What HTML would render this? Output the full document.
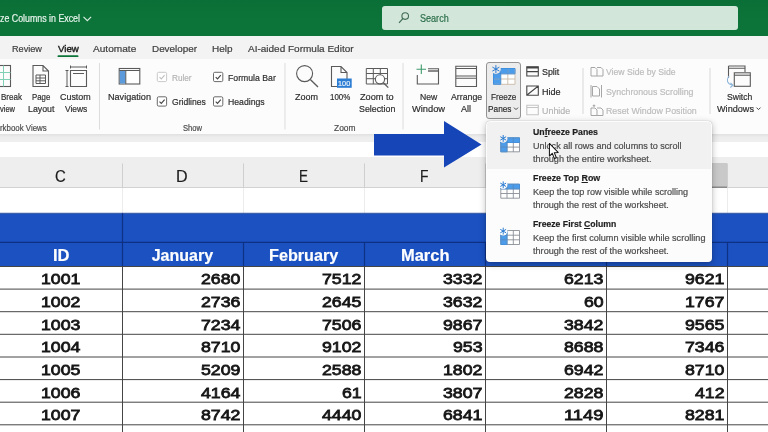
<!DOCTYPE html><html><head><meta charset="utf-8"><title>Excel - Freeze Panes</title><style>
html,body{margin:0;padding:0}body{width:768px;height:432px;overflow:hidden;position:relative;background:#fff;font-family:"Liberation Sans", sans-serif}
.a{position:absolute}.t{position:absolute;white-space:nowrap;line-height:1;transform-origin:0 50%;-webkit-text-stroke-width:.2px}
#txt{position:absolute;left:0;top:0;width:768px;height:432px;will-change:transform;opacity:.999}

#title{left:0;top:0;width:768px;height:36px;background:linear-gradient(#0a6f36,#0c7439 60%)}
#search{left:382px;top:6px;width:356px;height:24px;border-radius:3px;background:#d2e7da}
#tabs{left:0;top:36px;width:768px;height:23px;background:#f3f3f3}
#ribbon{left:0;top:59px;width:768px;height:75px;background:#fcfcfc}
#strip{left:0;top:134px;width:768px;height:8px;background:linear-gradient(#e0e0e0,#ededed 40%,#efefef)}
#fbar{left:0;top:142px;width:768px;height:15px;background:#fff}
#colhdr{left:0;top:157px;width:768px;height:31px;background:#eeeeee;border-bottom:1px solid #d2d2d2;box-sizing:border-box}
#band{left:0;top:213.5px;width:768px;height:52.8px;background:#1b51c1}
#menu{left:486px;top:121px;width:226px;height:141px;background:#fcfcfc;border-radius:4px;box-shadow:0 2px 7px rgba(0,0,0,.28),0 0 1px rgba(0,0,0,.35)}
#hl{left:487px;top:122px;width:224px;height:47px;background:#f1f1f1;border-radius:3px 3px 0 0}
#fz{left:486px;top:62px;width:35px;height:57px;box-sizing:border-box;background:#ececec;border:1px solid #939393;border-radius:3px}

</style></head><body>
<div class="a" id="title"></div>
<div class="a" id="search"></div>
<div class="a" id="tabs"></div>
<div class="a" id="ribbon"></div>
<div class="a" id="strip"></div>
<div class="a" id="fbar"></div>
<div class="a" id="colhdr"></div>
<div class="a" id="band"></div>
<svg class="a" style="left:0;top:0" width="768" height="432" viewBox="0 0 768 432" shape-rendering="auto"><line x1="122.5" y1="163.5" x2="122.5" y2="188" stroke="#cfcfcf" stroke-width="1"/><line x1="243.5" y1="163.5" x2="243.5" y2="188" stroke="#cfcfcf" stroke-width="1"/><line x1="364.5" y1="163.5" x2="364.5" y2="188" stroke="#cfcfcf" stroke-width="1"/><line x1="485.5" y1="163.5" x2="485.5" y2="188" stroke="#cfcfcf" stroke-width="1"/><line x1="606.5" y1="163.5" x2="606.5" y2="188" stroke="#cfcfcf" stroke-width="1"/><line x1="727.5" y1="163.5" x2="727.5" y2="188" stroke="#cfcfcf" stroke-width="1"/><rect x="712" y="163" width="15" height="25" fill="#c9c9c9"/><rect x="712" y="186.5" width="15" height="1.5" fill="#8a8a8a"/><line x1="122.5" y1="188" x2="122.5" y2="213" stroke="#ececec" stroke-width="1"/><line x1="243.5" y1="188" x2="243.5" y2="213" stroke="#ececec" stroke-width="1"/><line x1="364.5" y1="188" x2="364.5" y2="213" stroke="#ececec" stroke-width="1"/><line x1="485.5" y1="188" x2="485.5" y2="213" stroke="#ececec" stroke-width="1"/><line x1="606.5" y1="188" x2="606.5" y2="213" stroke="#ececec" stroke-width="1"/><line x1="727.5" y1="188" x2="727.5" y2="213" stroke="#ececec" stroke-width="1"/><line x1="0" y1="242.3" x2="768" y2="242.3" stroke="#0e3184" stroke-width="1.2"/><line x1="122.5" y1="213" x2="122.5" y2="267" stroke="#0e3184" stroke-width="1.2"/><line x1="243.5" y1="242" x2="243.5" y2="267" stroke="#0e3184" stroke-width="1.2"/><line x1="364.5" y1="242" x2="364.5" y2="267" stroke="#0e3184" stroke-width="1.2"/><line x1="485.5" y1="242" x2="485.5" y2="267" stroke="#0e3184" stroke-width="1.2"/><line x1="606.5" y1="242" x2="606.5" y2="267" stroke="#0e3184" stroke-width="1.2"/><line x1="727.5" y1="242" x2="727.5" y2="267" stroke="#0e3184" stroke-width="1.2"/><line x1="0" y1="213.3" x2="768" y2="213.3" stroke="#0f3a98" stroke-width="1"/><line x1="0" y1="266.5" x2="768" y2="266.5" stroke="#454545" stroke-width="1"/><line x1="0" y1="289.1" x2="768" y2="289.1" stroke="#454545" stroke-width="1"/><line x1="0" y1="311.7" x2="768" y2="311.7" stroke="#454545" stroke-width="1"/><line x1="0" y1="334.3" x2="768" y2="334.3" stroke="#454545" stroke-width="1"/><line x1="0" y1="357.0" x2="768" y2="357.0" stroke="#454545" stroke-width="1"/><line x1="0" y1="379.6" x2="768" y2="379.6" stroke="#454545" stroke-width="1"/><line x1="0" y1="402.2" x2="768" y2="402.2" stroke="#454545" stroke-width="1"/><line x1="0" y1="424.8" x2="768" y2="424.8" stroke="#454545" stroke-width="1"/><line x1="122.5" y1="266.5" x2="122.5" y2="432" stroke="#454545" stroke-width="1"/><line x1="243.5" y1="266.5" x2="243.5" y2="432" stroke="#454545" stroke-width="1"/><line x1="364.5" y1="266.5" x2="364.5" y2="432" stroke="#454545" stroke-width="1"/><line x1="485.5" y1="266.5" x2="485.5" y2="432" stroke="#454545" stroke-width="1"/><line x1="606.5" y1="266.5" x2="606.5" y2="432" stroke="#454545" stroke-width="1"/><line x1="727.5" y1="266.5" x2="727.5" y2="432" stroke="#454545" stroke-width="1"/><polygon points="374,134 444,134 444,121 481.5,144.5 444,167.5 444,155.5 374,155.5" fill="#1645b8"/></svg>
<div class="a" id="fz"></div>
<svg class="a" style="left:0;top:0" width="768" height="140" viewBox="0 0 768 140" fill="none" stroke-linecap="butt"><polyline points="83.5,16.8 87.3,20.6 91.1,16.8" stroke="#d9eee1" stroke-width="1.2"/><circle cx="405.2" cy="16.1" r="3.3" stroke="#3e6a52" stroke-width="1.1"/><line x1="402.8" y1="18.6" x2="399" y2="22.8" stroke="#3e6a52" stroke-width="1.2"/><rect x="57.5" y="55.3" width="21" height="1.8" rx=".9" fill="#0c7439" stroke="none"/><line x1="99.5" y1="63" x2="99.5" y2="129.5" stroke="#dcdcdc" stroke-width="1"/><line x1="285" y1="63" x2="285" y2="129.5" stroke="#dcdcdc" stroke-width="1"/><line x1="403" y1="63" x2="403" y2="129.5" stroke="#dcdcdc" stroke-width="1"/><line x1="583" y1="68" x2="583" y2="114" stroke="#d8d8d8" stroke-width="1"/><line x1="710" y1="68" x2="710" y2="114" stroke="#d8d8d8" stroke-width="1"/><rect x="-6" y="65.5" width="16.5" height="21" stroke="#5a5a5a" stroke-width="1.1"/><line x1="3.5" y1="65.5" x2="3.5" y2="86.5" stroke="#7fd0b4" stroke-width="1"/><line x1="-6" y1="72.5" x2="10.5" y2="72.5" stroke="#7fd0b4" stroke-width="1"/><line x1="-6" y1="79.5" x2="10.5" y2="79.5" stroke="#7fd0b4" stroke-width="1"/><path d="M33,65.5 H43 L48.5,71 V86.5 H33 Z M43,65.5 V71 H48.5" stroke="#5a5a5a" stroke-width="1.1"/><path d="M36,75 H45.5 V83.5 H36 Z M36,78 H45.5 M36,80.8 H45.5 M40,75 V83.5" stroke="#5a5a5a" stroke-width="1"/><path d="M70.5,70.5 H86.5 V86.5 H70.5 Z M73,73.5 H84" stroke="#5a5a5a" stroke-width="1.1"/><path d="M70.5,67 H86.5 M70.5,65.5 V68.5 M86.5,65.5 V68.5 M67,70.5 V86.5 M65.5,70.5 H68.5 M65.5,86.5 H68.5" stroke="#5a5a5a" stroke-width="1"/><rect x="119.2" y="68.5" width="20.6" height="15.5" fill="#fff" stroke="#5a5a5a" stroke-width="1.1"/><rect x="119.8" y="70.5" width="5.8" height="13" fill="#5b9bdc" stroke="none"/><path d="M119.2,70.5 H139.8 M125.8,70.5 V84" stroke="#5a5a5a" stroke-width="1"/><rect x="157.3" y="72.3" width="9.3" height="9.3" rx="1.3" fill="#fff" stroke="#c9c9c9" stroke-width="1"/><polyline points="159.5,77.1 161.3,78.89999999999999 164.60000000000002,75.1" stroke="#c0c0c0" stroke-width="1.1"/><rect x="157.3" y="96.8" width="9.3" height="9.3" rx="1.3" fill="#fff" stroke="#6a6a6a" stroke-width="1"/><polyline points="159.5,101.6 161.3,103.39999999999999 164.60000000000002,99.6" stroke="#444" stroke-width="1.1"/><rect x="213.5" y="72.3" width="9.3" height="9.3" rx="1.3" fill="#fff" stroke="#6a6a6a" stroke-width="1"/><polyline points="215.7,77.1 217.5,78.89999999999999 220.8,75.1" stroke="#444" stroke-width="1.1"/><rect x="213.5" y="96.8" width="9.3" height="9.3" rx="1.3" fill="#fff" stroke="#6a6a6a" stroke-width="1"/><polyline points="215.7,101.6 217.5,103.39999999999999 220.8,99.6" stroke="#444" stroke-width="1.1"/><circle cx="304.6" cy="73.6" r="8" stroke="#5a5a5a" stroke-width="1.1"/><line x1="310.3" y1="79.5" x2="318" y2="87" stroke="#5a5a5a" stroke-width="1.3"/><path d="M331.5,66.5 H341 L347,72.5 V86.5 H331.5 Z M341,66.5 V72.5 H347" stroke="#5a5a5a" stroke-width="1.1"/><rect x="337" y="78.5" width="14.7" height="9.3" fill="#2b7cd3" stroke="none"/><path d="M366.3,68.5 H387.5 V84 H366.3 Z M366.3,73.5 H387.5 M366.3,78.7 H387.5 M373.3,68.5 V84 M380.3,68.5 V84" stroke="#5a5a5a" stroke-width="1"/><circle cx="380" cy="79.3" r="4.6" fill="#fff" stroke="#5a5a5a" stroke-width="1.1"/><line x1="383.4" y1="82.8" x2="388.3" y2="87.6" stroke="#5a5a5a" stroke-width="1.3"/><path d="M428,68.8 H438.5 V84 H417.3 V75" stroke="#5a5a5a" stroke-width="1.1"/><path d="M428,71 H438.5" stroke="#5a5a5a" stroke-width="1.4"/><path d="M421.3,64.5 V74 M416.5,69.2 H426" stroke="#3f9a6c" stroke-width="1.1"/><path d="M455.8,66.3 H476.5 V86.5 H455.8 Z M455.8,68.5 H476.5 M455.8,76 H476.5 M455.8,78.2 H476.5" stroke="#5a5a5a" stroke-width="1.1"/><rect x="493.5" y="68.5" width="21.5" height="15.8" fill="#fff" stroke="none"/><rect x="493.5" y="68.5" width="21.5" height="5.3" fill="#4b9ceb" stroke="none"/><rect x="493.5" y="68.5" width="7.2" height="15.8" fill="#4b9ceb" stroke="none"/><path d="M493.5,68.5 H515.0 V84.3 H493.5 Z M493.5,73.8 H515.0 M493.5,79.0 H515.0 M500.7,68.5 V84.3 M507.8,68.5 V84.3" stroke="#cdbfae" stroke-width="1"/><path d="M493.5,68.5 H515.0 V73.8 H493.5 Z M500.7,68.5 V73.8 M507.8,68.5 V73.8" stroke="#3f8fdf" stroke-width="1"/><path d="M493.5,68.5 H500.7 V84.3 H493.5 Z M493.5,73.8 H500.7 M493.5,79.0 H500.7" stroke="#3f8fdf" stroke-width="1"/><circle cx="495.9" cy="69.1" r="4.9" fill="#ebebeb" stroke="none"/><path d="M495.9,65.1 L495.9,73.1 M492.4,67.1 L499.4,71.1 M499.4,67.1 L492.4,71.1 " stroke="#2b7cd3" stroke-width="1"/><path d="M526.8,66.8 H538.3 V76 H526.8 Z M526.8,71.6 H538.3" stroke="#444" stroke-width="1.1"/><path d="M526.8,67.6 H538.3" stroke="#444" stroke-width="1.8"/><path d="M526.8,86 H538.3 V95.3 H526.8 Z M527,95 L538,86.3" stroke="#444" stroke-width="1.1"/><path d="M526.8,105.3 H538.3 V114.7 H526.8 Z M526.8,107.5 H538.3" stroke="#c4c4c4" stroke-width="1.1"/><path d="M591,67.5 H595 L597,69.5 V76 H591 Z M597,67.5 H601 L603,69.5 V76 H597" stroke="#a6a6a6" stroke-width="1"/><path d="M592.5,86.5 H597 L599.5,89 V96 H592.5 Z M591,85 V97.5 M601.5,85 V97.5" stroke="#a6a6a6" stroke-width="1"/><path d="M591,108 H595 L597,110 V115.5 H591 Z M597,108 H601 L603,110 V115.5 H597 M594,104.5 V107 M592.7,105.7 H595.3" stroke="#a6a6a6" stroke-width="1"/><path d="M728.5,66 H745 V72 M728.5,66 V78 M728.5,68.3 H745" stroke="#5a5a5a" stroke-width="1.1"/><rect x="734.3" y="72.8" width="16" height="13.5" fill="#fcfcfc" stroke="#5a5a5a" stroke-width="1.1"/><path d="M734.3,75.2 H750.3" stroke="#5a5a5a" stroke-width="1.1"/><path d="M729,76 C726,80 727,84 732.5,85.2 M730.5,82.8 L733,85.3 L730.3,87.5" stroke="#8fb6d9" stroke-width="1.1"/><polyline points="514,107.6 516,109.6 518,107.6" stroke="#444" stroke-width="1"/><polyline points="756.5,107.6 758.5,109.6 760.5,107.6" stroke="#444" stroke-width="1"/></svg>
<div class="a" id="menu"></div><div class="a" id="hl"></div>
<svg class="a" style="left:0;top:0" width="768" height="432" viewBox="0 0 768 432" fill="none"><rect x="500.8" y="137.8" width="18.7" height="14.0" fill="#fff" stroke="none"/><rect x="500.8" y="137.8" width="18.7" height="4.7" fill="#4b9ceb" stroke="none"/><rect x="500.8" y="137.8" width="6.2" height="14.0" fill="#4b9ceb" stroke="none"/><path d="M500.8,137.8 H519.5 V151.8 H500.8 Z M500.8,142.5 H519.5 M500.8,147.1 H519.5 M507.0,137.8 V151.8 M513.3,137.8 V151.8" stroke="#8a8f96" stroke-width="0.9"/><path d="M500.8,137.8 H519.5 V142.5 H500.8 Z M507.0,137.8 V142.5 M513.3,137.8 V142.5" stroke="#3f8fdf" stroke-width="0.9"/><path d="M500.8,137.8 H507.0 V151.8 H500.8 Z M500.8,142.5 H507.0 M500.8,147.1 H507.0" stroke="#3f8fdf" stroke-width="0.9"/><circle cx="503.2" cy="138.4" r="4.3" fill="#f0f0f0" stroke="none"/><path d="M503.2,135.0 L503.2,141.8 M500.3,136.7 L506.1,140.1 M506.1,136.7 L500.3,140.1 " stroke="#2b7cd3" stroke-width="1"/><rect x="500.8" y="184.2" width="18.7" height="14.0" fill="#fff" stroke="none"/><rect x="500.8" y="184.2" width="18.7" height="4.7" fill="#4b9ceb" stroke="none"/><path d="M500.8,184.2 H519.5 V198.2 H500.8 Z M500.8,188.9 H519.5 M500.8,193.5 H519.5 M507.0,184.2 V198.2 M513.3,184.2 V198.2" stroke="#8a8f96" stroke-width="0.9"/><path d="M500.8,184.2 H519.5 V188.9 H500.8 Z M507.0,184.2 V188.9 M513.3,184.2 V188.9" stroke="#3f8fdf" stroke-width="0.9"/><circle cx="503.2" cy="184.8" r="4.3" fill="#fcfcfc" stroke="none"/><path d="M503.2,181.4 L503.2,188.2 M500.3,183.1 L506.1,186.5 M506.1,183.1 L500.3,186.5 " stroke="#2b7cd3" stroke-width="1"/><rect x="500.8" y="230.5" width="18.7" height="14.0" fill="#fff" stroke="none"/><rect x="500.8" y="230.5" width="6.2" height="14.0" fill="#4b9ceb" stroke="none"/><path d="M500.8,230.5 H519.5 V244.5 H500.8 Z M500.8,235.2 H519.5 M500.8,239.8 H519.5 M507.0,230.5 V244.5 M513.3,230.5 V244.5" stroke="#8a8f96" stroke-width="0.9"/><path d="M500.8,230.5 H507.0 V244.5 H500.8 Z M500.8,235.2 H507.0 M500.8,239.8 H507.0" stroke="#3f8fdf" stroke-width="0.9"/><circle cx="503.2" cy="231.1" r="4.3" fill="#fcfcfc" stroke="none"/><path d="M503.2,227.7 L503.2,234.5 M500.3,229.4 L506.1,232.8 M506.1,229.4 L500.3,232.8 " stroke="#2b7cd3" stroke-width="1"/></svg>
<div id="txt">
<span class="t" id="t0" style="left:0.0px;top:13.9px;font-size:10px;font-weight:400;color:#e9f5ee;transform:scaleX(0.883);">ze Columns in Excel</span>
<span class="t" id="t1" style="left:419.8px;top:13.5px;font-size:10px;font-weight:400;color:#2c6e4a;transform:scaleX(0.906);">Search</span>
<span class="t" id="t2" style="left:12.0px;top:43.7px;font-size:9.6px;font-weight:400;color:#3e3e3e;transform:scaleX(0.953);">Review</span>
<span class="t" id="t3" style="left:57.5px;top:43.7px;font-size:9.6px;font-weight:400;color:#222;transform:scaleX(1.013);-webkit-text-stroke:.4px #222;">View</span>
<span class="t" id="t4" style="left:93.0px;top:43.7px;font-size:9.6px;font-weight:400;color:#3e3e3e;transform:scaleX(1.054);">Automate</span>
<span class="t" id="t5" style="left:151.7px;top:43.7px;font-size:9.6px;font-weight:400;color:#3e3e3e;transform:scaleX(1.029);">Developer</span>
<span class="t" id="t6" style="left:211.5px;top:43.7px;font-size:9.6px;font-weight:400;color:#3e3e3e;transform:scaleX(1.039);">Help</span>
<span class="t" id="t7" style="left:248.2px;top:43.7px;font-size:9.6px;font-weight:400;color:#3e3e3e;transform:scaleX(1.042);">AI-aided Formula Editor</span>
<span class="t" id="t8" style="left:1.0px;top:92.0px;font-size:9.4px;font-weight:400;color:#2e2e2e;transform:scaleX(0.857);">Break</span>
<span class="t" id="t9" style="left:0.0px;top:104.0px;font-size:9.4px;font-weight:400;color:#2e2e2e;transform:scaleX(0.799);">view</span>
<span class="t" id="t10" style="left:31.7px;top:92.0px;font-size:9.4px;font-weight:400;color:#2e2e2e;transform:scaleX(0.835);">Page</span>
<span class="t" id="t11" style="left:28.3px;top:104.0px;font-size:9.4px;font-weight:400;color:#2e2e2e;transform:scaleX(0.938);">Layout</span>
<span class="t" id="t12" style="left:60.3px;top:92.0px;font-size:9.4px;font-weight:400;color:#2e2e2e;transform:scaleX(0.950);">Custom</span>
<span class="t" id="t13" style="left:64.7px;top:104.0px;font-size:9.4px;font-weight:400;color:#2e2e2e;transform:scaleX(0.898);">Views</span>
<span class="t" id="t14" style="left:108.0px;top:92.0px;font-size:9.4px;font-weight:400;color:#2e2e2e;transform:scaleX(0.970);">Navigation</span>
<span class="t" id="t15" style="left:171.7px;top:72.9px;font-size:9.4px;font-weight:400;color:#b4b4b4;transform:scaleX(0.875);">Ruler</span>
<span class="t" id="t16" style="left:171.5px;top:97.4px;font-size:9.4px;font-weight:400;color:#2e2e2e;transform:scaleX(0.914);">Gridlines</span>
<span class="t" id="t17" style="left:227.5px;top:72.9px;font-size:9.4px;font-weight:400;color:#2e2e2e;transform:scaleX(0.927);">Formula Bar</span>
<span class="t" id="t18" style="left:227.5px;top:97.4px;font-size:9.4px;font-weight:400;color:#2e2e2e;transform:scaleX(0.926);">Headings</span>
<span class="t" id="t19" style="left:295.3px;top:92.0px;font-size:9.4px;font-weight:400;color:#2e2e2e;transform:scaleX(0.960);">Zoom</span>
<span class="t" id="t20" style="left:329.7px;top:92.0px;font-size:9.4px;font-weight:400;color:#2e2e2e;transform:scaleX(0.846);">100%</span>
<span class="t" id="t21" style="left:359.7px;top:92.0px;font-size:9.4px;font-weight:400;color:#2e2e2e;transform:scaleX(0.977);">Zoom to</span>
<span class="t" id="t22" style="left:358.7px;top:104.0px;font-size:9.4px;font-weight:400;color:#2e2e2e;transform:scaleX(0.941);">Selection</span>
<span class="t" id="t23" style="left:419.7px;top:92.0px;font-size:9.4px;font-weight:400;color:#2e2e2e;transform:scaleX(0.922);">New</span>
<span class="t" id="t24" style="left:411.7px;top:104.0px;font-size:9.4px;font-weight:400;color:#2e2e2e;transform:scaleX(0.990);">Window</span>
<span class="t" id="t25" style="left:450.8px;top:92.0px;font-size:9.4px;font-weight:400;color:#2e2e2e;transform:scaleX(0.935);">Arrange</span>
<span class="t" id="t26" style="left:461.3px;top:104.0px;font-size:9.4px;font-weight:400;color:#2e2e2e;transform:scaleX(0.960);">All</span>
<span class="t" id="t27" style="left:491.3px;top:92.0px;font-size:9.4px;font-weight:400;color:#2e2e2e;transform:scaleX(0.870);">Freeze</span>
<span class="t" id="t28" style="left:488.0px;top:104.0px;font-size:9.4px;font-weight:400;color:#2e2e2e;transform:scaleX(0.884);">Panes</span>
<span class="t" id="t29" style="left:541.7px;top:67.2px;font-size:9.4px;font-weight:400;color:#2a2a2a;transform:scaleX(0.948);">Split</span>
<span class="t" id="t30" style="left:541.7px;top:86.5px;font-size:9.4px;font-weight:400;color:#2a2a2a;transform:scaleX(0.965);">Hide</span>
<span class="t" id="t31" style="left:541.7px;top:106.1px;font-size:9.4px;font-weight:400;color:#b4b4b4;transform:scaleX(0.952);">Unhide</span>
<span class="t" id="t32" style="left:606.3px;top:67.2px;font-size:9.4px;font-weight:400;color:#bcbcbc;transform:scaleX(0.922);">View Side by Side</span>
<span class="t" id="t33" style="left:606.3px;top:86.5px;font-size:9.4px;font-weight:400;color:#bcbcbc;transform:scaleX(0.937);">Synchronous Scrolling</span>
<span class="t" id="t34" style="left:606.3px;top:106.1px;font-size:9.4px;font-weight:400;color:#bcbcbc;transform:scaleX(0.941);">Reset Window Position</span>
<span class="t" id="t35" style="left:726.7px;top:92.0px;font-size:9.4px;font-weight:400;color:#2e2e2e;transform:scaleX(0.916);">Switch</span>
<span class="t" id="t36" style="left:717.0px;top:104.0px;font-size:9.4px;font-weight:400;color:#2e2e2e;transform:scaleX(0.973);">Windows</span>
<span class="t" id="t37" style="left:338.3px;top:79.7px;font-size:7.5px;font-weight:400;color:#e6f0fb;transform:scaleX(0.975);">100</span>
<span class="t" id="t38" style="left:0.0px;top:123.5px;font-size:8.8px;font-weight:400;color:#4c4c4c;transform:scaleX(0.895);">rkbook Views</span>
<span class="t" id="t39" style="left:182.5px;top:123.5px;font-size:8.8px;font-weight:400;color:#4c4c4c;transform:scaleX(0.863);">Show</span>
<span class="t" id="t40" style="left:333.5px;top:123.5px;font-size:8.8px;font-weight:400;color:#4c4c4c;transform:scaleX(0.956);">Zoom</span>
<span class="t" id="t41" style="left:55.2px;top:168.2px;font-size:16.3px;font-weight:400;color:#1c1c1c;transform:scaleX(0.918);">C</span>
<span class="t" id="t42" style="left:176.2px;top:168.2px;font-size:16.3px;font-weight:400;color:#1c1c1c;transform:scaleX(0.986);">D</span>
<span class="t" id="t43" style="left:299.0px;top:168.2px;font-size:16.3px;font-weight:400;color:#1c1c1c;transform:scaleX(0.828);">E</span>
<span class="t" id="t44" style="left:420.2px;top:168.2px;font-size:16.3px;font-weight:400;color:#1c1c1c;transform:scaleX(0.854);">F</span>
<span class="t" id="t45" style="left:52.5px;top:248.4px;font-size:16px;font-weight:700;color:#fff;transform:scaleX(1.031);">ID</span>
<span class="t" id="t46" style="left:151.7px;top:248.4px;font-size:16px;font-weight:700;color:#fff;">January</span>
<span class="t" id="t47" style="left:269.0px;top:248.4px;font-size:16px;font-weight:700;color:#fff;transform:scaleX(1.012);">February</span>
<span class="t" id="t48" style="left:400.5px;top:248.4px;font-size:16px;font-weight:700;color:#fff;transform:scaleX(1.029);">March</span>
<span class="t" id="t49" style="left:41.1px;top:271.4px;font-size:15.2px;font-weight:400;color:#161616;transform:scaleX(1.166);-webkit-text-stroke:.8px #161616;">1001</span>
<span class="t" id="t50" style="left:201.1px;top:271.4px;font-size:15.2px;font-weight:400;color:#161616;transform:scaleX(1.166);-webkit-text-stroke:.8px #161616;">2680</span>
<span class="t" id="t51" style="left:322.1px;top:271.4px;font-size:15.2px;font-weight:400;color:#161616;transform:scaleX(1.166);-webkit-text-stroke:.8px #161616;">7512</span>
<span class="t" id="t52" style="left:443.1px;top:271.4px;font-size:15.2px;font-weight:400;color:#161616;transform:scaleX(1.166);-webkit-text-stroke:.8px #161616;">3332</span>
<span class="t" id="t53" style="left:564.1px;top:271.4px;font-size:15.2px;font-weight:400;color:#161616;transform:scaleX(1.166);-webkit-text-stroke:.8px #161616;">6213</span>
<span class="t" id="t54" style="left:685.1px;top:271.4px;font-size:15.2px;font-weight:400;color:#161616;transform:scaleX(1.166);-webkit-text-stroke:.8px #161616;">9621</span>
<span class="t" id="t55" style="left:41.1px;top:294.0px;font-size:15.2px;font-weight:400;color:#161616;transform:scaleX(1.166);-webkit-text-stroke:.8px #161616;">1002</span>
<span class="t" id="t56" style="left:201.1px;top:294.0px;font-size:15.2px;font-weight:400;color:#161616;transform:scaleX(1.166);-webkit-text-stroke:.8px #161616;">2736</span>
<span class="t" id="t57" style="left:322.1px;top:294.0px;font-size:15.2px;font-weight:400;color:#161616;transform:scaleX(1.166);-webkit-text-stroke:.8px #161616;">2645</span>
<span class="t" id="t58" style="left:443.1px;top:294.0px;font-size:15.2px;font-weight:400;color:#161616;transform:scaleX(1.166);-webkit-text-stroke:.8px #161616;">3632</span>
<span class="t" id="t59" style="left:583.8px;top:294.0px;font-size:15.2px;font-weight:400;color:#161616;transform:scaleX(1.165);-webkit-text-stroke:.8px #161616;">60</span>
<span class="t" id="t60" style="left:685.1px;top:294.0px;font-size:15.2px;font-weight:400;color:#161616;transform:scaleX(1.166);-webkit-text-stroke:.8px #161616;">1767</span>
<span class="t" id="t61" style="left:41.1px;top:316.6px;font-size:15.2px;font-weight:400;color:#161616;transform:scaleX(1.166);-webkit-text-stroke:.8px #161616;">1003</span>
<span class="t" id="t62" style="left:201.1px;top:316.6px;font-size:15.2px;font-weight:400;color:#161616;transform:scaleX(1.166);-webkit-text-stroke:.8px #161616;">7234</span>
<span class="t" id="t63" style="left:322.1px;top:316.6px;font-size:15.2px;font-weight:400;color:#161616;transform:scaleX(1.166);-webkit-text-stroke:.8px #161616;">7506</span>
<span class="t" id="t64" style="left:443.1px;top:316.6px;font-size:15.2px;font-weight:400;color:#161616;transform:scaleX(1.166);-webkit-text-stroke:.8px #161616;">9867</span>
<span class="t" id="t65" style="left:564.1px;top:316.6px;font-size:15.2px;font-weight:400;color:#161616;transform:scaleX(1.166);-webkit-text-stroke:.8px #161616;">3842</span>
<span class="t" id="t66" style="left:685.1px;top:316.6px;font-size:15.2px;font-weight:400;color:#161616;transform:scaleX(1.166);-webkit-text-stroke:.8px #161616;">9565</span>
<span class="t" id="t67" style="left:41.1px;top:339.2px;font-size:15.2px;font-weight:400;color:#161616;transform:scaleX(1.166);-webkit-text-stroke:.8px #161616;">1004</span>
<span class="t" id="t68" style="left:201.1px;top:339.2px;font-size:15.2px;font-weight:400;color:#161616;transform:scaleX(1.166);-webkit-text-stroke:.8px #161616;">8710</span>
<span class="t" id="t69" style="left:322.1px;top:339.2px;font-size:15.2px;font-weight:400;color:#161616;transform:scaleX(1.166);-webkit-text-stroke:.8px #161616;">9102</span>
<span class="t" id="t70" style="left:452.9px;top:339.2px;font-size:15.2px;font-weight:400;color:#161616;transform:scaleX(1.166);-webkit-text-stroke:.8px #161616;">953</span>
<span class="t" id="t71" style="left:564.1px;top:339.2px;font-size:15.2px;font-weight:400;color:#161616;transform:scaleX(1.166);-webkit-text-stroke:.8px #161616;">8688</span>
<span class="t" id="t72" style="left:685.1px;top:339.2px;font-size:15.2px;font-weight:400;color:#161616;transform:scaleX(1.166);-webkit-text-stroke:.8px #161616;">7346</span>
<span class="t" id="t73" style="left:41.1px;top:361.9px;font-size:15.2px;font-weight:400;color:#161616;transform:scaleX(1.166);-webkit-text-stroke:.8px #161616;">1005</span>
<span class="t" id="t74" style="left:201.1px;top:361.9px;font-size:15.2px;font-weight:400;color:#161616;transform:scaleX(1.166);-webkit-text-stroke:.8px #161616;">5209</span>
<span class="t" id="t75" style="left:322.1px;top:361.9px;font-size:15.2px;font-weight:400;color:#161616;transform:scaleX(1.166);-webkit-text-stroke:.8px #161616;">2588</span>
<span class="t" id="t76" style="left:443.1px;top:361.9px;font-size:15.2px;font-weight:400;color:#161616;transform:scaleX(1.166);-webkit-text-stroke:.8px #161616;">1802</span>
<span class="t" id="t77" style="left:564.1px;top:361.9px;font-size:15.2px;font-weight:400;color:#161616;transform:scaleX(1.166);-webkit-text-stroke:.8px #161616;">6942</span>
<span class="t" id="t78" style="left:685.1px;top:361.9px;font-size:15.2px;font-weight:400;color:#161616;transform:scaleX(1.166);-webkit-text-stroke:.8px #161616;">8710</span>
<span class="t" id="t79" style="left:41.1px;top:384.5px;font-size:15.2px;font-weight:400;color:#161616;transform:scaleX(1.166);-webkit-text-stroke:.8px #161616;">1006</span>
<span class="t" id="t80" style="left:201.1px;top:384.5px;font-size:15.2px;font-weight:400;color:#161616;transform:scaleX(1.166);-webkit-text-stroke:.8px #161616;">4164</span>
<span class="t" id="t81" style="left:341.8px;top:384.5px;font-size:15.2px;font-weight:400;color:#161616;transform:scaleX(1.165);-webkit-text-stroke:.8px #161616;">61</span>
<span class="t" id="t82" style="left:443.1px;top:384.5px;font-size:15.2px;font-weight:400;color:#161616;transform:scaleX(1.166);-webkit-text-stroke:.8px #161616;">3807</span>
<span class="t" id="t83" style="left:564.1px;top:384.5px;font-size:15.2px;font-weight:400;color:#161616;transform:scaleX(1.166);-webkit-text-stroke:.8px #161616;">2828</span>
<span class="t" id="t84" style="left:695.0px;top:384.5px;font-size:15.2px;font-weight:400;color:#161616;transform:scaleX(1.166);-webkit-text-stroke:.8px #161616;">412</span>
<span class="t" id="t85" style="left:41.1px;top:407.1px;font-size:15.2px;font-weight:400;color:#161616;transform:scaleX(1.166);-webkit-text-stroke:.8px #161616;">1007</span>
<span class="t" id="t86" style="left:201.1px;top:407.1px;font-size:15.2px;font-weight:400;color:#161616;transform:scaleX(1.166);-webkit-text-stroke:.8px #161616;">8742</span>
<span class="t" id="t87" style="left:322.1px;top:407.1px;font-size:15.2px;font-weight:400;color:#161616;transform:scaleX(1.166);-webkit-text-stroke:.8px #161616;">4440</span>
<span class="t" id="t88" style="left:443.1px;top:407.1px;font-size:15.2px;font-weight:400;color:#161616;transform:scaleX(1.166);-webkit-text-stroke:.8px #161616;">6841</span>
<span class="t" id="t89" style="left:564.1px;top:407.1px;font-size:15.2px;font-weight:400;color:#161616;transform:scaleX(1.206);-webkit-text-stroke:.8px #161616;">1149</span>
<span class="t" id="t90" style="left:685.1px;top:407.1px;font-size:15.2px;font-weight:400;color:#161616;transform:scaleX(1.166);-webkit-text-stroke:.8px #161616;">8281</span>
<span class="t" id="t91" style="left:532.5px;top:128.1px;font-size:9px;font-weight:700;color:#1f1f1f;transform:scaleX(0.969);">Un<u>f</u>reeze Panes</span>
<span class="t" id="t92" style="left:532.5px;top:142.4px;font-size:9px;font-weight:400;color:#4c4c4c;transform:scaleX(1.006);">Unlock all rows and columns to scroll</span>
<span class="t" id="t93" style="left:532.5px;top:155.1px;font-size:9px;font-weight:400;color:#4c4c4c;transform:scaleX(1.016);">through the entire worksheet.</span>
<span class="t" id="t94" style="left:532.5px;top:173.9px;font-size:9px;font-weight:700;color:#1f1f1f;transform:scaleX(0.983);">Freeze Top <u>R</u>ow</span>
<span class="t" id="t95" style="left:532.5px;top:187.8px;font-size:9px;font-weight:400;color:#4c4c4c;transform:scaleX(1.007);">Keep the top row visible while scrolling</span>
<span class="t" id="t96" style="left:532.5px;top:200.8px;font-size:9px;font-weight:400;color:#4c4c4c;transform:scaleX(1.013);">through the rest of the worksheet.</span>
<span class="t" id="t97" style="left:532.5px;top:220.4px;font-size:9px;font-weight:700;color:#1f1f1f;transform:scaleX(0.962);">Freeze First <u>C</u>olumn</span>
<span class="t" id="t98" style="left:532.5px;top:234.0px;font-size:9px;font-weight:400;color:#4c4c4c;transform:scaleX(1.011);">Keep the first column visible while scrolling</span>
<span class="t" id="t99" style="left:532.5px;top:247.0px;font-size:9px;font-weight:400;color:#4c4c4c;transform:scaleX(1.013);">through the rest of the worksheet.</span>
</div>
<svg class="a" style="left:547.2px;top:140.6px" width="13" height="20.5" viewBox="0 0 14 22"><path d="M2.6,2.6 L2.6,16.2 L5.7,13.3 L8,18.9 L10.1,18 L7.8,12.5 L12,12.3 Z" fill="#fff" stroke="#111" stroke-width="1.1" stroke-linejoin="round"/></svg>
</body></html>
